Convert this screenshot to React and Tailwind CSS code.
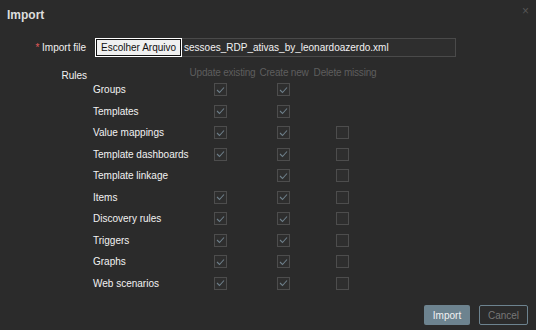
import React from "react";

const rows = [
  ["Groups", true, true, null],
  ["Templates", true, true, null],
  ["Value mappings", true, true, false],
  ["Template dashboards", true, true, false],
  ["Template linkage", null, true, false],
  ["Items", true, true, false],
  ["Discovery rules", true, true, false],
  ["Triggers", true, true, false],
  ["Graphs", true, true, false],
  ["Web scenarios", true, true, false],
];

function Box({ v }) {
  if (v === null) return <div className="w-[13px] h-[13px]" />;
  return (
    <div className="w-[13px] h-[13px] border border-[#4d4d4d] bg-[#2e2e2e] flex items-center justify-center">
      {v && (
        <svg width="9" height="8" viewBox="0 0 9 8">
          <path d="M1 4 L3.5 6.5 L8 1.5" fill="none" stroke="#6e7f8a" strokeWidth="1.1" />
        </svg>
      )}
    </div>
  );
}

export default function App() {
  return (
    <div
      className="w-[536px] h-[330px] bg-[#2b2b2b] text-[#f2f2f2] relative overflow-hidden"
      style={{ fontFamily: '"Liberation Sans", Arial, sans-serif' }}
    >
      <div className="absolute right-[7px] top-[2px] text-[#555] text-[12px]">×</div>
      <div className="pl-[7px] pt-[7px] text-[12px] font-bold text-[#ddd] leading-[16px]">Import</div>
      <div className="mt-[15px] flex items-center h-[19px]">
        <div className="w-[87px] text-right text-[10px] text-[#f2f2f2] pr-[1px]">
          <span className="text-[#e45959]">* </span>Import file
        </div>
        <div className="ml-[8px] w-[361px] h-[19px] border border-[#4a4a4a] bg-[#2e2e2e] flex items-center">
          <div className="h-[17px] px-[4px] ml-[0px] bg-[#f0f0f0] border border-[#111] outline outline-1 outline-[#fff] text-[#111] text-[10px] flex items-center">
            Escolher Arquivo
          </div>
          <span className="ml-[3px] text-[10px] text-[#f2f2f2]">sessoes_RDP_ativas_by_leonardoazerdo.xml</span>
        </div>
      </div>
      <div className="mt-[8px] flex">
        <div className="w-[87px] text-right text-[10px] pt-[3px]">Rules</div>
        <div className="ml-[6px] flex flex-col">
          <div className="flex text-[10px] text-[#5e5e5e] h-[14px] items-center tracking-[-0.2px]">
            <div className="w-[96px]" />
            <div className="w-[67px] text-center">Update existing</div>
            <div className="w-[56px] text-center">Create new</div>
            <div className="w-[66px] text-center">Delete missing</div>
          </div>
          {rows.map(([label, a, b, c]) => (
            <div key={label} className="flex items-center h-[21.5px] text-[10px]">
              <div className="w-[121px]">{label}</div>
              <div className="w-[63px]"><Box v={a} /></div>
              <div className="w-[59px]"><Box v={b} /></div>
              <div><Box v={c} /></div>
            </div>
          ))}
        </div>
      </div>
      <div className="absolute right-[8px] bottom-[5px] flex gap-[9px]">
        <div className="w-[46px] h-[20px] bg-[#6d838f] rounded-[2px] text-[#f2f2f2] text-[10px] flex items-center justify-center">Import</div>
        <div className="w-[49px] h-[20px] border border-[#6d838f] rounded-[2px] text-[#777] text-[10px] flex items-center justify-center">Cancel</div>
      </div>
    </div>
  );
}
